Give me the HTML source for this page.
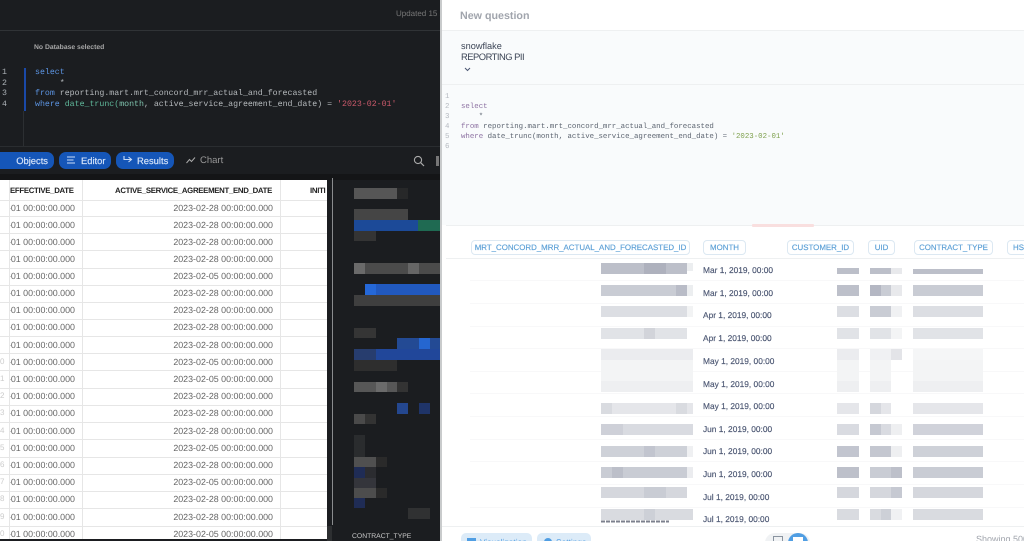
<!DOCTYPE html>
<html><head><meta charset="utf-8"><style>
html,body{margin:0;padding:0;width:1024px;height:541px;overflow:hidden;background:#fff}
body{position:relative;font-family:"Liberation Sans",sans-serif;text-rendering:geometricPrecision}
#w{position:absolute;left:0;top:0;width:1024px;height:541px;overflow:hidden;filter:blur(.3px)}
.t{position:absolute;white-space:nowrap}
.m{font-family:"Liberation Mono",monospace;white-space:pre}
.bt{position:absolute;top:152px;height:17px;background:#1556b8;border-radius:7px;color:#d3e2f8;font-size:9.4px;line-height:17px;-webkit-text-stroke:.2px #d3e2f8}
.d{position:absolute;left:173px;width:100px;text-align:right;font-size:8.9px;line-height:12px;color:#666;white-space:nowrap}
.e{position:absolute;left:-30px;width:95px;text-align:right;font-size:8.9px;line-height:12px;color:#666;white-space:nowrap}
.n{position:absolute;left:0;font-size:8px;line-height:12px;color:#ccc}
.l{position:absolute;left:0;width:327px;height:1px;background:#e6e6e6}
.h{position:absolute;top:5px;font-size:7.8px;letter-spacing:-.3px;line-height:12px;font-weight:bold;color:#222;white-space:nowrap}
.p{position:absolute;top:240px;height:13px;line-height:13px;border:1px solid #dce8f2;border-radius:4px;color:#5a9fd6;font-size:7.9px;-webkit-text-stroke:.15px #5a9fd6;text-align:center;white-space:nowrap;overflow:hidden;background:#fff}
.q{position:absolute;left:703px;font-size:8.35px;line-height:12px;color:#4c5773;-webkit-text-stroke:.15px #4c5773;white-space:nowrap}
.r{position:absolute;left:470px;width:554px;height:1px;background:#f8f8f9}
</style></head><body><div id="w">
<div style="position:absolute;left:0;top:0;width:441px;height:541px;background:#1b1d20"></div>
<div class="t" style="left:396px;top:8px;font-size:8px;line-height:12px;color:#777">Updated 15 s</div>
<div style="position:absolute;left:0;top:30px;width:440px;height:1px;background:#303336"></div>
<div class="t" style="left:34px;top:42px;font-size:6.8px;line-height:12px;color:#a8a8a8;font-weight:bold">No Database selected</div>
<div style="position:absolute;left:24px;top:68px;width:2px;height:43px;background:#1a49a8"></div>
<div style="position:absolute;left:23px;top:111px;width:1px;height:35px;background:#2c2f32"></div>
<div class="t m" style="left:2px;top:68px;font-size:8.25px;line-height:10.7px;color:#aab0b5">1
2
3
4</div>
<div class="t m" style="left:35px;top:68px;font-size:8.25px;line-height:10.7px;color:#b4b8bb"><span style="color:#5b93e0">select</span>
     *
<span style="color:#5b93e0">from</span> reporting.mart.mrt_concord_mrr_actual_and_forecasted
<span style="color:#5b93e0">where</span> <span style="color:#5fb89a">date_trunc(</span><span style="color:#7fc4ae">month</span>, active_service_agreement_end_date) = <span style="color:#c9596a">'2023-02-01'</span></div>
<div style="position:absolute;left:0;top:146px;width:440px;height:1px;background:#2a2d30"></div>
<div style="position:absolute;left:0;top:174px;width:440px;height:6px;background:#141517"></div>
<div class="bt" style="left:-8px;width:62px"><span style="position:absolute;right:6px;top:0">Objects</span></div>
<div class="bt" style="left:59px;width:52px"><span style="position:absolute;left:22px;top:0">Editor</span>
<svg style="position:absolute;left:8px;top:4px" width="9" height="9" viewBox="0 0 9 9"><path d="M0 1H8M0 4H6.5M0 7H8" stroke="#c9dcf7" stroke-width="1.1" fill="none"/></svg></div>
<div class="bt" style="left:116px;width:58px"><span style="position:absolute;left:21px;top:0">Results</span>
<svg style="position:absolute;left:7px;top:3px" width="10" height="9" viewBox="0 0 10 9"><path d="M1 1V4.5H8M5.5 2L8.5 4.5L5.5 7" stroke="#c9dcf7" stroke-width="1.1" fill="none"/></svg></div>
<svg style="position:absolute;left:186px;top:156px" width="10" height="9" viewBox="0 0 10 9"><path d="M.5 7L3.5 3.5L5.5 5.5L9 1.5" stroke="#aaa" stroke-width="1" fill="none"/></svg>
<div class="t" style="left:200px;top:154px;font-size:9.5px;line-height:14px;color:#999">Chart</div>
<svg style="position:absolute;left:413px;top:155px" width="12" height="12" viewBox="0 0 12 12"><circle cx="5" cy="5" r="3.6" stroke="#aaa" stroke-width="1.1" fill="none"/><path d="M7.7 7.7L11 11" stroke="#aaa" stroke-width="1.2"/></svg>
<div style="position:absolute;left:436px;top:156px;width:3px;height:10px;background:#777"></div>

<div style="position:absolute;left:0;top:180px;width:327px;height:359px;background:#fff;overflow:hidden">
<div style="position:absolute;left:9px;top:0;width:1px;height:361px;background:#e6e6e6"></div>
<div style="position:absolute;left:82px;top:0;width:1px;height:361px;background:#e6e6e6"></div>
<div style="position:absolute;left:280px;top:0;width:1px;height:361px;background:#e6e6e6"></div>
<div class="h" style="left:10px">EFFECTIVE_DATE</div>
<div class="h" style="left:115px">ACTIVE_SERVICE_AGREEMENT_END_DATE</div>
<div class="h" style="left:310px">INITI</div>
<div class="l" style="top:20px"></div><div class="l" style="top:36px"></div><div class="l" style="top:53px"></div><div class="l" style="top:70px"></div><div class="l" style="top:88px"></div><div class="l" style="top:105px"></div><div class="l" style="top:122px"></div><div class="l" style="top:139px"></div><div class="l" style="top:156px"></div><div class="l" style="top:173px"></div><div class="l" style="top:190px"></div><div class="l" style="top:208px"></div><div class="l" style="top:225px"></div><div class="l" style="top:242px"></div><div class="l" style="top:259px"></div><div class="l" style="top:277px"></div><div class="l" style="top:294px"></div><div class="l" style="top:311px"></div><div class="l" style="top:328px"></div><div class="l" style="top:346px"></div>
<div class="d" style="top:22px">2023-02-28 00:00:00.000</div>
<div class="d" style="top:39px">2023-02-28 00:00:00.000</div>
<div class="d" style="top:56px">2023-02-28 00:00:00.000</div>
<div class="d" style="top:73px">2023-02-28 00:00:00.000</div>
<div class="d" style="top:90px">2023-02-05 00:00:00.000</div>
<div class="d" style="top:107px">2023-02-28 00:00:00.000</div>
<div class="d" style="top:124px">2023-02-28 00:00:00.000</div>
<div class="d" style="top:141px">2023-02-28 00:00:00.000</div>
<div class="d" style="top:159px">2023-02-28 00:00:00.000</div>
<div class="d" style="top:176px">2023-02-05 00:00:00.000</div>
<div class="d" style="top:193px">2023-02-05 00:00:00.000</div>
<div class="d" style="top:210px">2023-02-28 00:00:00.000</div>
<div class="d" style="top:227px">2023-02-28 00:00:00.000</div>
<div class="d" style="top:245px">2023-02-28 00:00:00.000</div>
<div class="d" style="top:262px">2023-02-05 00:00:00.000</div>
<div class="d" style="top:279px">2023-02-28 00:00:00.000</div>
<div class="d" style="top:296px">2023-02-05 00:00:00.000</div>
<div class="d" style="top:313px">2023-02-28 00:00:00.000</div>
<div class="d" style="top:331px">2023-02-28 00:00:00.000</div>
<div class="d" style="top:348px">2023-02-05 00:00:00.000</div>
<div style="position:absolute;left:10px;top:0;width:72px;height:361px;overflow:hidden">
<div class="e" style="top:22px">-01 00:00:00.000</div>
<div class="e" style="top:39px">-01 00:00:00.000</div>
<div class="e" style="top:56px">-01 00:00:00.000</div>
<div class="e" style="top:73px">-01 00:00:00.000</div>
<div class="e" style="top:90px">-01 00:00:00.000</div>
<div class="e" style="top:107px">-01 00:00:00.000</div>
<div class="e" style="top:124px">-01 00:00:00.000</div>
<div class="e" style="top:141px">-01 00:00:00.000</div>
<div class="e" style="top:159px">-01 00:00:00.000</div>
<div class="e" style="top:176px">-01 00:00:00.000</div>
<div class="e" style="top:193px">-01 00:00:00.000</div>
<div class="e" style="top:210px">-01 00:00:00.000</div>
<div class="e" style="top:227px">-01 00:00:00.000</div>
<div class="e" style="top:245px">-01 00:00:00.000</div>
<div class="e" style="top:262px">-01 00:00:00.000</div>
<div class="e" style="top:279px">-01 00:00:00.000</div>
<div class="e" style="top:296px">-01 00:00:00.000</div>
<div class="e" style="top:313px">-01 00:00:00.000</div>
<div class="e" style="top:331px">-01 00:00:00.000</div>
<div class="e" style="top:348px">-01 00:00:00.000</div>
</div>
<div class="n" style="top:176px">0</div><div class="n" style="top:193px">1</div><div class="n" style="top:210px">2</div><div class="n" style="top:227px">3</div><div class="n" style="top:245px">4</div><div class="n" style="top:262px">5</div><div class="n" style="top:279px">6</div><div class="n" style="top:296px">7</div><div class="n" style="top:313px">8</div><div class="n" style="top:331px">9</div><div class="n" style="top:348px">0</div>
</div>
<div style="position:absolute;left:332px;top:178px;width:1px;height:347px;background:#8a8c8e"></div>
<svg style="position:absolute;left:0;top:0" width="441" height="541" shape-rendering="crispEdges">
<rect x="354" y="188" width="43" height="11" fill="#565656"/><rect x="397" y="188" width="11" height="11" fill="#272829"/>
<rect x="354" y="209" width="54" height="11" fill="#454545"/>
<rect x="354" y="220" width="64" height="11" fill="#1c4a98"/><rect x="418" y="220" width="22" height="11" fill="#1f6a52"/>
<rect x="354" y="231" width="22" height="10" fill="#343434"/>
<rect x="354" y="263" width="86" height="11" fill="#4b4b4b"/><rect x="354" y="263" width="11" height="11" fill="#6a6a6a"/><rect x="408" y="263" width="11" height="11" fill="#666"/>
<rect x="365" y="284" width="75" height="11" fill="#2159bf"/><rect x="365" y="284" width="11" height="11" fill="#2568d8"/>
<rect x="354" y="295" width="86" height="11" fill="#3f3f3f"/>
<rect x="354" y="328" width="22" height="10" fill="#353535"/>
<rect x="397" y="338" width="43" height="11" fill="#234a94"/><rect x="419" y="338" width="11" height="11" fill="#2566d0"/>
<rect x="354" y="349" width="22" height="11" fill="#273d6e"/><rect x="376" y="349" width="64" height="11" fill="#21479a"/>
<rect x="354" y="360" width="43" height="11" fill="#2e2e2e"/>
<rect x="354" y="382" width="43" height="10" fill="#575757"/><rect x="376" y="382" width="11" height="10" fill="#6b6b6b"/><rect x="397" y="382" width="11" height="10" fill="#333"/>
<rect x="397" y="403" width="11" height="11" fill="#24478f"/><rect x="419" y="403" width="11" height="11" fill="#1f3468"/>
<rect x="354" y="414" width="11" height="10" fill="#4a4a4a"/><rect x="365" y="414" width="11" height="10" fill="#333"/>
<rect x="354" y="435" width="11" height="22" fill="#2a2c2e"/>
<rect x="354" y="457" width="22" height="10" fill="#505050"/><rect x="376" y="457" width="11" height="10" fill="#2a2a2a"/>
<rect x="354" y="467" width="11" height="11" fill="#1f2c55"/><rect x="365" y="467" width="11" height="11" fill="#2b2c30"/>
<rect x="354" y="478" width="22" height="10" fill="#34353b"/>
<rect x="354" y="488" width="22" height="10" fill="#4d4d4d"/><rect x="376" y="488" width="11" height="10" fill="#2a2a2a"/>
<rect x="354" y="498" width="11" height="10" fill="#1f2c55"/>
<rect x="408" y="508" width="22" height="11" fill="#303132"/>
</svg>
<div class="t" style="left:352px;top:531px;font-size:6.8px;line-height:12px;color:#c8c8c8">CONTRACT_TYPE</div>
<div style="position:absolute;left:327px;top:526px;width:5px;height:15px;background:#2d2f31"></div>

<div style="position:absolute;left:440px;top:0;width:2px;height:541px;background:#c9cbcc"></div>
<div style="position:absolute;left:442px;top:0;width:582px;height:541px;background:#fff"></div>
<div class="t" style="left:460px;top:9px;font-size:10.7px;line-height:15px;color:#a1a5ad;font-weight:bold">New question</div>
<div style="position:absolute;left:442px;top:31px;width:582px;height:194px;background:#f9fbfc"></div>
<div style="position:absolute;left:442px;top:30px;width:582px;height:1px;background:#eef0f1"></div>
<div style="position:absolute;left:442px;top:84px;width:582px;height:1px;background:#eef0f1"></div>
<div class="t" style="left:461px;top:40px;font-size:9.2px;line-height:12px;color:#3c4556">snowflake</div>
<div class="t" style="left:461px;top:51px;font-size:9.4px;letter-spacing:-.5px;line-height:12px;color:#3c4556">REPORTING PII</div>
<svg style="position:absolute;left:464px;top:67px" width="7" height="5" viewBox="0 0 7 5"><path d="M1 1L3.5 3.5L6 1" stroke="#4c5773" stroke-width="1" fill="none"/></svg>
<div class="t m" style="left:445px;top:92px;font-size:7.4px;line-height:10px;color:#b5bac0">1
2
3
4
5
6</div>
<div class="t m" style="left:461px;top:102px;font-size:7.4px;line-height:10px;color:#5c6470"><span style="color:#8b6fa0">select</span>
    *
<span style="color:#8b6fa0">from</span> reporting.mart.mrt_concord_mrr_actual_and_forecasted
<span style="color:#8b6fa0">where</span> date_trunc(month, active_service_agreement_end_date) = <span style="color:#7ea04d">'2023-02-01'</span></div>
<div style="position:absolute;left:446px;top:225px;width:578px;height:1px;background:#eef0f1"></div>
<div style="position:absolute;left:752px;top:224px;width:62px;height:3px;background:#f9dfdf;border-radius:1px"></div>

<div class="p" style="left:471px;width:217px">MRT_CONCORD_MRR_ACTUAL_AND_FORECASTED_ID</div>
<div class="p" style="left:703px;width:41px">MONTH</div>
<div class="p" style="left:787px;width:65px">CUSTOMER_ID</div>
<div class="p" style="left:868px;width:25px">UID</div>
<div class="p" style="left:914px;width:77px">CONTRACT_TYPE</div>
<div class="p" style="left:1007px;width:30px;text-align:left;padding-left:5px">HS</div>
<div style="position:absolute;left:446px;top:258px;width:578px;height:1px;background:#eef0f1"></div>

<div class="r" style="top:280px"></div><div class="r" style="top:303px"></div><div class="r" style="top:326px"></div><div class="r" style="top:348px"></div><div class="r" style="top:371px"></div><div class="r" style="top:393px"></div><div class="r" style="top:416px"></div><div class="r" style="top:439px"></div><div class="r" style="top:461px"></div><div class="r" style="top:484px"></div><div class="r" style="top:507px"></div>

<svg style="position:absolute;left:0;top:0" width="1024" height="541" shape-rendering="crispEdges">
<g fill="#bcbfc9"><rect x="601" y="263" width="86" height="11"/><rect x="837" y="268" width="22" height="6"/><rect x="870" y="268" width="21" height="6"/><rect x="913" y="269" width="70" height="5"/></g>
<rect x="644" y="263" width="22" height="11" fill="#aeb1bd"/><rect x="687" y="263" width="6" height="8" fill="#eceef0"/><rect x="891" y="268" width="11" height="6" fill="#e8e9ec"/>
<g fill="#c9ccd4"><rect x="601" y="285" width="81" height="11"/><rect x="837" y="285" width="22" height="11" fill="#bdc0ca"/><rect x="870" y="285" width="21" height="11"/><rect x="913" y="285" width="70" height="11"/></g>
<rect x="676" y="285" width="11" height="11" fill="#b9bcc7"/><rect x="687" y="285" width="6" height="11" fill="#eceef0"/><rect x="870" y="285" width="11" height="11" fill="#b4b7c3"/><rect x="891" y="285" width="11" height="11" fill="#e8e9ec"/>
<g fill="#dcdee3"><rect x="601" y="306" width="92" height="11"/><rect x="837" y="306" width="22" height="11"/><rect x="870" y="306" width="21" height="11" fill="#c9ccd4"/><rect x="913" y="306" width="70" height="11"/></g>
<rect x="891" y="306" width="11" height="11" fill="#f0f1f3"/><rect x="687" y="306" width="6" height="11" fill="#f2f3f4"/>
<g fill="#e1e3e7"><rect x="601" y="328" width="86" height="11"/><rect x="837" y="328" width="22" height="11"/><rect x="870" y="328" width="21" height="11"/><rect x="913" y="328" width="70" height="11"/></g>
<rect x="644" y="328" width="11" height="11" fill="#d2d4da"/><rect x="891" y="328" width="11" height="11" fill="#f3f4f5"/>
<g fill="#ebecef"><rect x="601" y="349" width="92" height="11"/><rect x="837" y="349" width="22" height="11"/><rect x="870" y="349" width="21" height="11" fill="#f0f1f3"/><rect x="891" y="349" width="11" height="11" fill="#e3e4e8"/><rect x="913" y="349" width="70" height="11" fill="#f5f6f7"/></g>
<g fill="#f3f4f5"><rect x="601" y="360" width="92" height="21"/><rect x="837" y="360" width="22" height="21"/><rect x="870" y="360" width="21" height="21"/><rect x="913" y="360" width="70" height="21"/></g>
<g fill="#eeeff1"><rect x="601" y="381" width="92" height="11"/><rect x="837" y="381" width="22" height="11"/><rect x="870" y="381" width="21" height="11"/><rect x="913" y="381" width="70" height="11"/></g>
<g fill="#e5e6ea"><rect x="601" y="403" width="92" height="11"/><rect x="837" y="403" width="22" height="11"/><rect x="870" y="403" width="21" height="11"/><rect x="913" y="403" width="70" height="11"/></g>
<rect x="676" y="403" width="11" height="11" fill="#d9dbe0"/><rect x="870" y="403" width="11" height="11" fill="#d5d7dd"/><rect x="601" y="403" width="11" height="11" fill="#d9dbe0"/>
<g fill="#d9dbe1"><rect x="601" y="424" width="92" height="11"/><rect x="837" y="424" width="22" height="11"/><rect x="870" y="424" width="21" height="11"/><rect x="913" y="424" width="70" height="11" fill="#d0d2da"/></g>
<rect x="870" y="424" width="11" height="11" fill="#c6c9d2"/><rect x="891" y="424" width="11" height="11" fill="#eeeff1"/><rect x="601" y="424" width="22" height="11" fill="#ced0d8"/>
<g fill="#ced1d8"><rect x="601" y="446" width="86" height="11"/><rect x="837" y="446" width="22" height="11" fill="#c2c5cf"/><rect x="870" y="446" width="21" height="11" fill="#c4c7d0"/><rect x="913" y="446" width="70" height="11"/></g>
<rect x="644" y="446" width="11" height="11" fill="#c2c5cf"/><rect x="687" y="446" width="6" height="11" fill="#eff0f2"/><rect x="891" y="446" width="11" height="11" fill="#eeeff1"/>
<g fill="#c9ccd4"><rect x="601" y="467" width="92" height="11"/><rect x="837" y="467" width="22" height="11" fill="#bdc0ca"/><rect x="870" y="467" width="32" height="11"/><rect x="913" y="467" width="70" height="11"/></g>
<rect x="612" y="467" width="11" height="11" fill="#bcbfc9"/><rect x="891" y="467" width="11" height="11" fill="#bdc0ca"/><rect x="687" y="467" width="6" height="11" fill="#ebecef"/>
<g fill="#d5d7dd"><rect x="601" y="487" width="86" height="11"/><rect x="837" y="487" width="22" height="11"/><rect x="870" y="487" width="32" height="11"/><rect x="913" y="487" width="70" height="11"/></g>
<rect x="644" y="487" width="22" height="11" fill="#c9ccd4"/><rect x="891" y="487" width="11" height="11" fill="#c6c9d2"/>
<g fill="#d9dbe0"><rect x="601" y="509" width="92" height="11"/><rect x="837" y="509" width="22" height="11"/><rect x="870" y="509" width="21" height="11"/><rect x="913" y="509" width="70" height="11"/></g>
<rect x="644" y="509" width="11" height="11" fill="#cdd0d7"/><rect x="881" y="509" width="11" height="11" fill="#cdd0d7"/><rect x="891" y="509" width="11" height="11" fill="#f0f1f3"/>
<path d="M601 521.5H669" stroke="#7d818e" stroke-width="2" stroke-dasharray="4 1" fill="none"/>
</svg>

<div class="q" style="top:264px">Mar 1, 2019, 00:00</div>
<div class="q" style="top:287px">Mar 1, 2019, 00:00</div>
<div class="q" style="top:309px">Apr 1, 2019, 00:00</div>
<div class="q" style="top:332px">Apr 1, 2019, 00:00</div>
<div class="q" style="top:355px">May 1, 2019, 00:00</div>
<div class="q" style="top:378px">May 1, 2019, 00:00</div>
<div class="q" style="top:400px">May 1, 2019, 00:00</div>
<div class="q" style="top:423px">Jun 1, 2019, 00:00</div>
<div class="q" style="top:445px">Jun 1, 2019, 00:00</div>
<div class="q" style="top:468px">Jun 1, 2019, 00:00</div>
<div class="q" style="top:491px">Jul 1, 2019, 00:00</div>
<div class="q" style="top:513px">Jul 1, 2019, 00:00</div>

<div style="position:absolute;left:442px;top:526px;width:582px;height:15px;background:#fff"></div>
<div style="position:absolute;left:442px;top:526px;width:582px;height:1px;background:#eef0f1"></div>
<div style="position:absolute;left:461px;top:533px;width:71px;height:20px;background:#dcebf8;border-radius:5px;overflow:hidden">
<div style="position:absolute;left:6px;top:5px;width:9px;height:8px;background:#509ee3"></div>
<div class="t" style="left:19px;top:3px;font-size:8.4px;line-height:12px;color:#509ee3">Visualization</div></div>
<div style="position:absolute;left:537px;top:533px;width:54px;height:20px;background:#dcebf8;border-radius:5px;overflow:hidden">
<div style="position:absolute;left:7px;top:5px;width:8px;height:8px;background:#509ee3;border-radius:50%"></div>
<div class="t" style="left:19px;top:3px;font-size:8.4px;line-height:12px;color:#509ee3">Settings</div></div>
<div style="position:absolute;left:765px;top:533px;width:45px;height:20px;background:#f0f2f4;border-radius:10px"></div>
<div style="position:absolute;left:773px;top:536px;width:10px;height:8px;border:1px solid #8a94a0;box-sizing:border-box"></div>
<div style="position:absolute;left:788px;top:533px;width:20px;height:20px;background:#509ee3;border-radius:50%"></div>
<div style="position:absolute;left:793px;top:537px;width:10px;height:6px;background:#fff"></div>
<div class="t" style="left:976px;top:533px;font-size:9px;line-height:12px;color:#a1a5ad">Showing 500 rows</div>
</div></body></html>
